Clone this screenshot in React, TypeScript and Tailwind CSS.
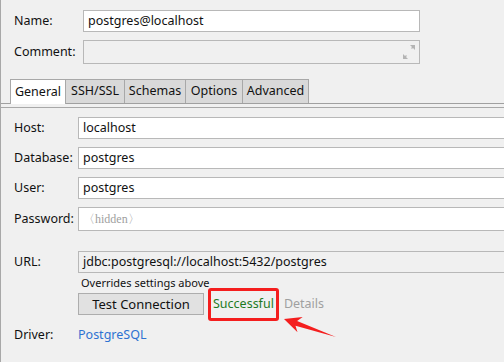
import React from "react";

const font = "font-['Noto_Sans','Liberation_Sans',sans-serif]";

function Field({
  label,
  value,
  labelW,
  h = "h-[22px]",
  w = "w-[440px]",
  bg = "bg-white",
  children,
}: {
  label: string;
  value?: React.ReactNode;
  labelW: string;
  h?: string;
  w?: string;
  bg?: string;
  children?: React.ReactNode;
}) {
  return (
    <div className={`flex items-center ${h}`}>
      <div className={`${labelW} shrink-0 leading-none`}>{label}</div>
      <div
        className={`relative ${w} ${h} shrink-0 ${bg} border border-[#b8b8b8] flex items-center pl-[4px] leading-none`}
      >
        {value}
        {children}
      </div>
    </div>
  );
}

function ResizeIcon() {
  return (
    <svg
      className="absolute right-[3px] top-[3px]"
      width="14"
      height="16"
      viewBox="0 0 14 16"
      fill="#b4b4b4"
    >
      <polygon points="8,1 13,1 13,6" />
      <line x1="12" y1="2" x2="9.5" y2="4.5" stroke="#b4b4b4" strokeWidth="1.2" />
      <polygon points="1,15 1,10 6,15" />
      <line x1="2" y1="14" x2="4.5" y2="11.5" stroke="#b4b4b4" strokeWidth="1.2" />
    </svg>
  );
}

export default function App() {
  const tabs = [
    { name: "General", w: "w-[56px]", active: true },
    { name: "SSH/SSL", w: "w-[59px]" },
    { name: "Schemas", w: "w-[61px]" },
    { name: "Options", w: "w-[57px]" },
    { name: "Advanced", w: "w-[66px]" },
  ];

  return (
    <div
      className={`relative w-[504px] h-[362px] overflow-hidden bg-[#f0f0f0] border-l border-[#a8a8a8] text-[12.5px] text-[#111] ${font}`}
    >
      {/* top fields */}
      <div className="pt-[10px] pl-[13px] flex flex-col gap-[8px]">
        <Field label="Name:" labelW="w-[69px]" w="w-[337px]" value="postgres@localhost" />
        <Field label="Comment:" labelW="w-[69px]" w="w-[337px]" h="h-[24px]" bg="bg-[#f0f0f0]">
          <ResizeIcon />
        </Field>
      </div>

      {/* tabs */}
      <div className="mt-[15px] flex h-[25px] pl-[9px] border-b border-[#a0a0a0]">
        {tabs.map((t, i) => (
          <div
            key={t.name}
            className={`${t.w} flex items-center justify-center leading-none border-t border-r border-[#a8a8a8] ${
              i === 0 ? "border-l" : ""
            } ${t.active ? "bg-white -mb-px h-[25px]" : "bg-[#d9d9d9] h-[24px]"}`}
          >
            {t.name}
          </div>
        ))}
      </div>
      <div className="mt-[3px] border-t border-[#a8a8a8]" />

      {/* general panel */}
      <div className="pt-[9px] pl-[13px] flex flex-col">
        <Field label="Host:" labelW="w-[64px]" value="localhost" />
        <div className="mt-[8px]">
          <Field label="Database:" labelW="w-[64px]" value="postgres" />
        </div>
        <div className="mt-[8px]">
          <Field label="User:" labelW="w-[64px]" value="postgres" />
        </div>
        <div className="mt-[8px]">
          <Field
            label="Password:"
            labelW="w-[64px]"
            h="h-[24px]"
            value={
              <span className="font-['Liberation_Serif',serif] text-[12px] text-[#a0a0a0]">
                〈hidden〉
              </span>
            }
          />
        </div>

        <div className="mt-[20px]">
          <Field
            label="URL:"
            labelW="w-[64px]"
            bg="bg-[#f0f0f0]"
            value="jdbc:postgresql://localhost:5432/postgres"
          />
        </div>
        <div className="pl-[67px] mt-[3px] h-[13px] text-[11px] leading-[13px]">
          Overrides settings above
        </div>

        <div className="mt-[4px] flex items-center h-[22px] pl-[64px]">
          <button className="w-[126px] h-[22px] bg-[#e1e1e1] border border-[#adadad] leading-none text-[13px]">
            Test Connection
          </button>
          <div className="relative ml-[9px] leading-none text-[#1f7a1f]">
            Successful
            <div className="absolute -left-[5px] -top-[10px] w-[71px] h-[33px] border-[3px] border-[#f41e1e] rounded-[3px]" />
          </div>
          <div className="ml-[10px] leading-none text-[#a0a0a0]">Details</div>
        </div>

        <div className="mt-[10px] flex items-center h-[20px]">
          <div className="w-[64px] leading-none">Driver:</div>
          <div className="leading-none text-[#2e72d2]">PostgreSQL</div>
        </div>
      </div>

      {/* annotation arrow */}
      <svg
        className="absolute left-[280px] top-[310px]"
        width="60"
        height="32"
        viewBox="0 0 60 32"
      >
        <polygon
          points="3,9 21.7,7 16.1,10.9 55,27 14.5,15.7 16.5,22.2"
          fill="#f41e1e"
        />
      </svg>
    </div>
  );
}
